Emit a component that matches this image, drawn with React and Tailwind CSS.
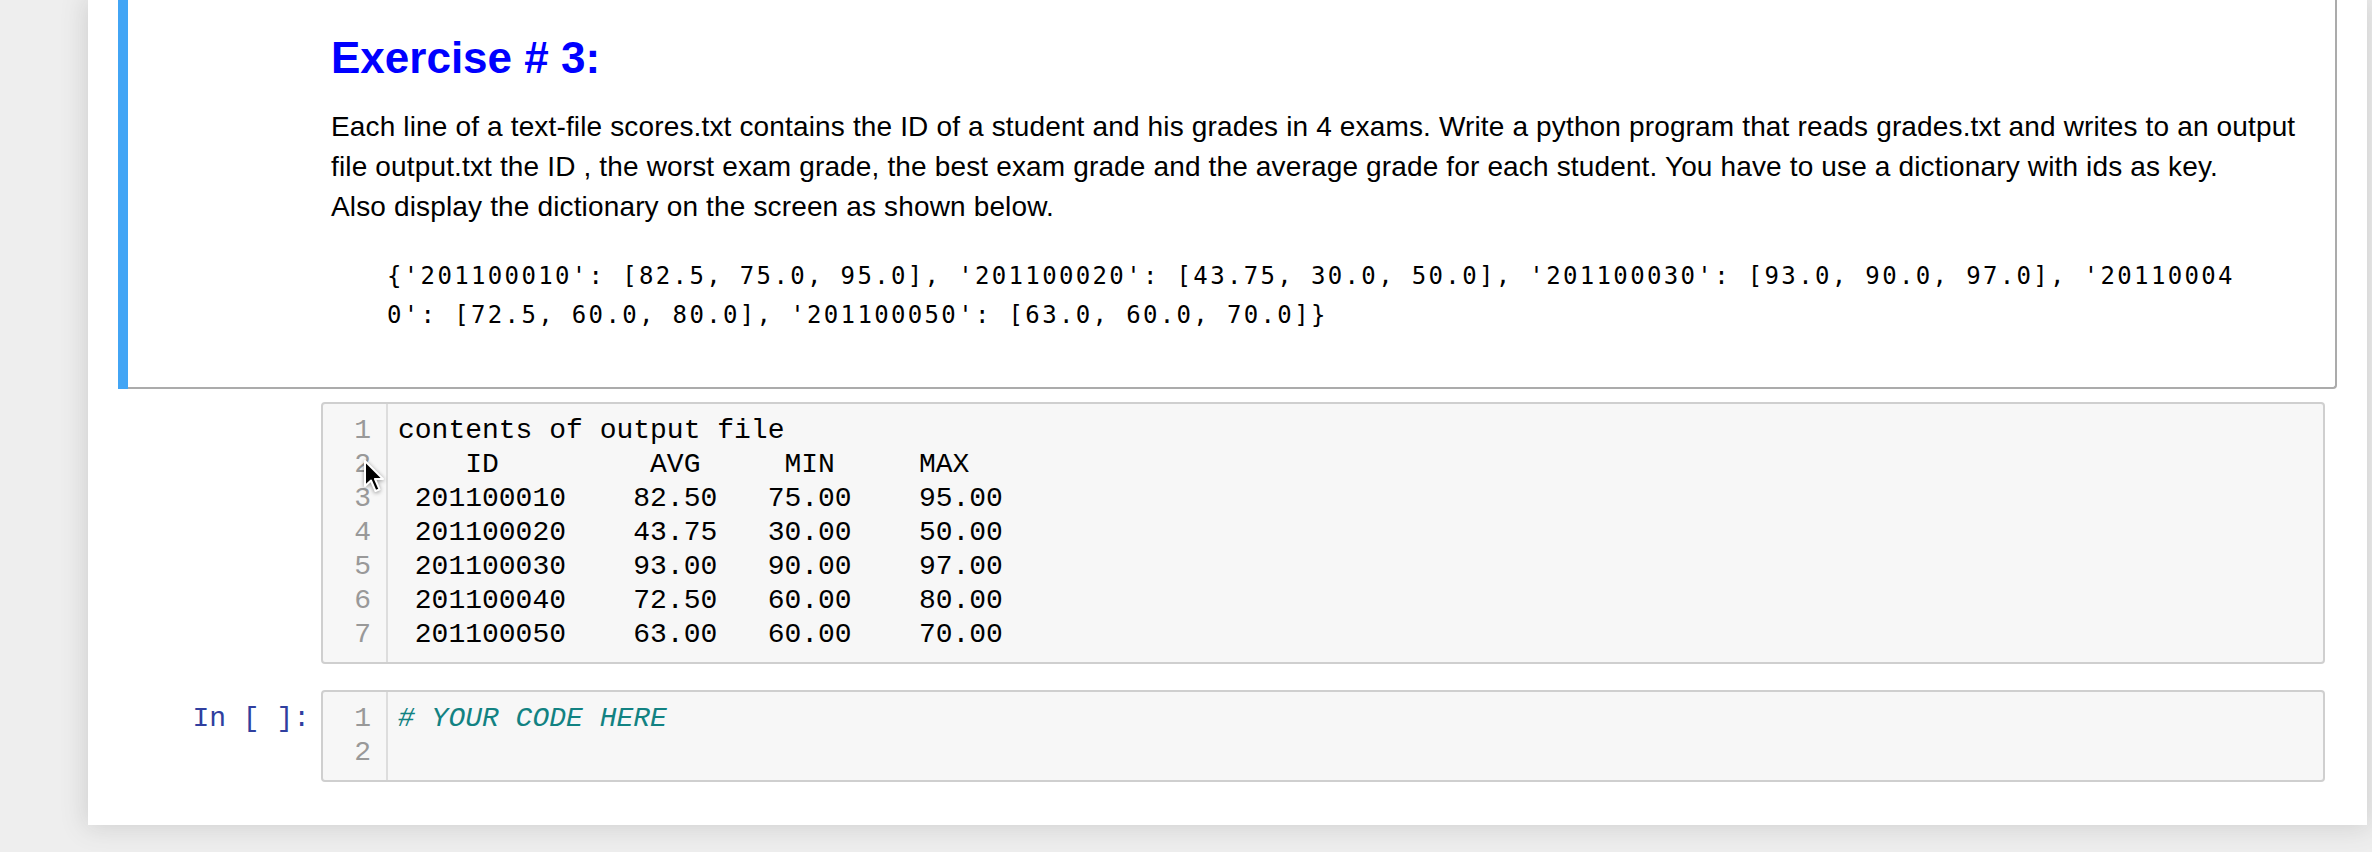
import React from 'react';

const outputLines = [
  'contents of output file',
  '    ID         AVG     MIN     MAX',
  ' 201100010    82.50   75.00    95.00',
  ' 201100020    43.75   30.00    50.00',
  ' 201100030    93.00   90.00    97.00',
  ' 201100040    72.50   60.00    80.00',
  ' 201100050    63.00   60.00    70.00',
];

const mono = { fontFamily: '"Liberation Mono", "Courier New", monospace' };

const CodeCell = ({ prompt, lines, children }) => (
  <div className="flex ml-[30px]">
    <div
      className="w-[203px] shrink-0 pr-[11px] pt-[12px] text-right text-[28px] leading-[34px] text-[#303f9f] whitespace-pre"
      style={mono}
    >
      {prompt}
    </div>
    <div className="relative flex w-[2004px] bg-[#f7f7f7] border-2 border-[#cfcfcf] rounded-[4px]">
      <div
        className="w-[65px] shrink-0 border-r-2 border-[#dddddd] pr-[15px] py-[10px] text-right text-[28px] leading-[34px] text-[#999999]"
        style={mono}
      >
        {lines.map((_, i) => (
          <div key={i}>{i + 1}</div>
        ))}
      </div>
      <div className="pl-[10px] py-[10px] text-[28px] leading-[34px] text-black" style={mono}>
        {lines.map((line, i) => (
          <div key={i} className="whitespace-pre h-[34px]">
            {line}
          </div>
        ))}
      </div>
      {children}
    </div>
  </div>
);

const Cursor = () => (
  <svg
    className="absolute left-[41px] top-[56px] drop-shadow-[0_1px_2px_rgba(0,0,0,0.4)]"
    width="22"
    height="34"
    viewBox="0 0 22 34"
  >
    <path
      d="M1 1 L1 26 L7 20.5 L11.5 31 L15.5 29.3 L11 19 L19 19 Z"
      fill="#000"
      stroke="#fff"
      strokeWidth="2"
      strokeLinejoin="round"
    />
  </svg>
);

export default function App() {
  return (
    <div className="w-[2372px] h-[852px] overflow-hidden bg-[#eeeeee]">
      <div className="ml-[88px] w-[2279px] bg-white pb-[43px] shadow-[0_0_24px_2px_rgba(87,87,87,0.2)]">
        {/* markdown cell */}
        <div className="flex ml-[30px] w-[2219px]">
          <div className="w-[10px] shrink-0 bg-[#42a5f5]" />
          <div className="flex-1 border-r-2 border-b-2 border-[#ababab] rounded-br-[4px] pl-[203px] pt-[34px] pb-[52px]">
            <h2
              className="text-[44px] leading-[48px] font-bold text-[#0000ff]"
              style={{ fontFamily: '"Liberation Sans", Arial, sans-serif' }}
            >
              Exercise # 3:
            </h2>
            <div
              className="mt-[25px] text-[28px] leading-[40px] tracking-[0.15px] text-black"
              style={{ fontFamily: '"Liberation Sans", Arial, sans-serif' }}
            >
              <div className="whitespace-nowrap">
                Each line of a text-file scores.txt contains the ID of a student and his grades in 4 exams. Write a python program that reads grades.txt and writes to an output
              </div>
              <div className="whitespace-nowrap">
                file output.txt the ID , the worst exam grade, the best exam grade and the average grade for each student. You have to use a dictionary with ids as key.
              </div>
              <div className="whitespace-nowrap">Also display the dictionary on the screen as shown below.</div>
            </div>
            <pre
              className="mt-[30px] ml-[56px] text-[24px] leading-[39px] tracking-[2.35px] text-black"
              style={{ fontFamily: '"DejaVu Sans Mono", Menlo, monospace' }}
            >
              <div>{"{'201100010': [82.5, 75.0, 95.0], '201100020': [43.75, 30.0, 50.0], '201100030': [93.0, 90.0, 97.0], '20110004"}</div>
              <div>{"0': [72.5, 60.0, 80.0], '201100050': [63.0, 60.0, 70.0]}"}</div>
            </pre>
          </div>
        </div>

        <div className="mt-[13px]">
          <CodeCell prompt="" lines={outputLines}>
            <Cursor />
          </CodeCell>
        </div>

        <div className="mt-[26px]">
          <CodeCell prompt="In [ ]:" lines={['', '']}>
            <div
              className="absolute left-[75px] top-[10px] text-[28px] leading-[34px] italic text-[#128282] whitespace-pre"
              style={mono}
            >
              # YOUR CODE HERE
            </div>
          </CodeCell>
        </div>
      </div>
    </div>
  );
}
